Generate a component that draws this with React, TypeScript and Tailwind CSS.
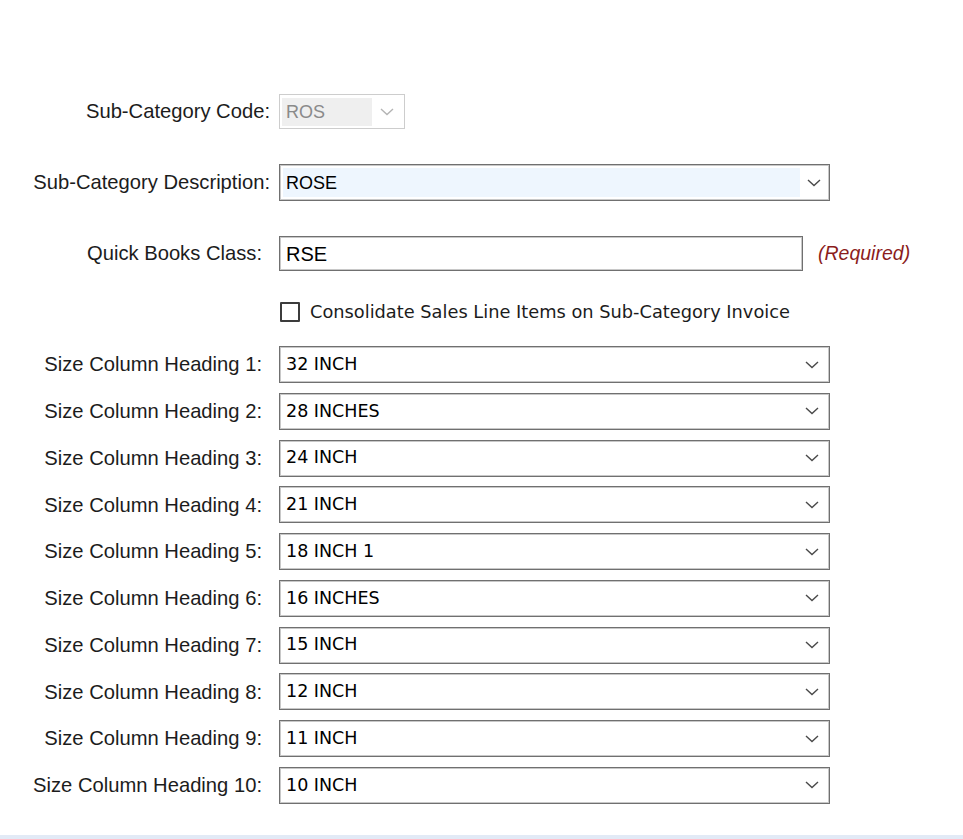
import React from "react";

const Chevron = ({ color = "#4a4a4a" }: { color?: string }) => (
  <svg width="14" height="8" viewBox="0 0 14 8" fill="none">
    <polyline points="1,1 7,6.5 13,1" stroke={color} strokeWidth="1.4" fill="none" />
  </svg>
);

const sizes = [
  "32 INCH",
  "28 INCHES",
  "24 INCH",
  "21 INCH",
  "18 INCH 1",
  "16 INCHES",
  "15 INCH",
  "12 INCH",
  "11 INCH",
  "10 INCH",
];

export default function App() {
  return (
    <div className="w-[963px] h-[839px] bg-white flex flex-col font-['Liberation_Sans',Arial,sans-serif] text-[#1c1c1c]">
      <div className="flex-1 flex flex-col pt-[94px]">
        {/* Sub-Category Code */}
        <div className="flex items-center h-[35px]">
          <div className="w-[270px] text-right text-[20.2px] leading-none">Sub-Category Code:</div>
          <div className="ml-[9px] w-[126px] h-[35px] border border-[#cdcdcd] flex items-center p-[2px] pr-0">
            <div className="w-[90px] h-[28px] bg-[#efefef] flex items-center pl-[4px] text-[18px] text-[#8a8a8a] leading-none">ROS</div>
            <div className="flex-1 flex justify-center pr-[2px]">
              <Chevron color="#b4b4b4" />
            </div>
          </div>
        </div>

        {/* Sub-Category Description */}
        <div className="flex items-center h-[37px] mt-[35px]">
          <div className="w-[270px] text-right text-[20.2px] leading-none">Sub-Category Description:</div>
          <div className="ml-[9px] w-[551px] h-[37px] border border-[#707070] shadow-[inset_0_0_0_1px_#c8c8c8] flex items-center p-[3px] pr-0">
            <div className="w-[517px] h-[29px] bg-[#eef6fe] flex items-center pl-[3px] text-[18px] text-black leading-none">ROSE</div>
            <div className="flex-1 flex justify-center pr-[2px]">
              <Chevron />
            </div>
          </div>
        </div>

        {/* Quick Books Class */}
        <div className="flex items-center h-[35px] mt-[35px]">
          <div className="w-[262px] text-right text-[20.2px] leading-none">Quick Books Class:</div>
          <div className="ml-[17px] w-[524px] h-[35px] border border-[#707070] shadow-[inset_0_0_0_1px_#c8c8c8] flex items-center pl-[6px] text-[20px] text-black leading-none">
            RSE
          </div>
          <div className="ml-[15px] text-[19.5px] italic text-[#8b1c1c] leading-none">(Required)</div>
        </div>

        {/* Checkbox */}
        <div className="flex items-center h-[20px] mt-[31px] pl-[280px]">
          <div className="w-[20px] h-[20px] border-2 border-[#3c3c3c] rounded-[1px] bg-white" />
          <div className="ml-[10px] text-[17.8px] leading-none font-['DejaVu_Sans',sans-serif] text-[#1c1c1c]">
            Consolidate Sales Line Items on Sub-Category Invoice
          </div>
        </div>

        {/* Size headings */}
        <div className="flex flex-col gap-[9.75px] mt-[24px]">
          {sizes.map((s, i) => (
            <div key={i} className="flex items-center h-[37px]">
              <div className="w-[262px] text-right text-[20.2px] leading-none">Size Column Heading {i + 1}:</div>
              <div className="ml-[17px] w-[551px] h-[37px] border border-[#707070] shadow-[inset_0_0_0_1px_#c8c8c8] flex items-center pl-[6px]">
                <div className="flex-1 text-[17.5px] leading-none font-['DejaVu_Sans',sans-serif] text-black">{s}</div>
                <div className="w-[31px] flex justify-center pr-[4px]">
                  <Chevron />
                </div>
              </div>
            </div>
          ))}
        </div>
      </div>
      <div className="h-[4px] bg-[#e2eaf6]" />
    </div>
  );
}
